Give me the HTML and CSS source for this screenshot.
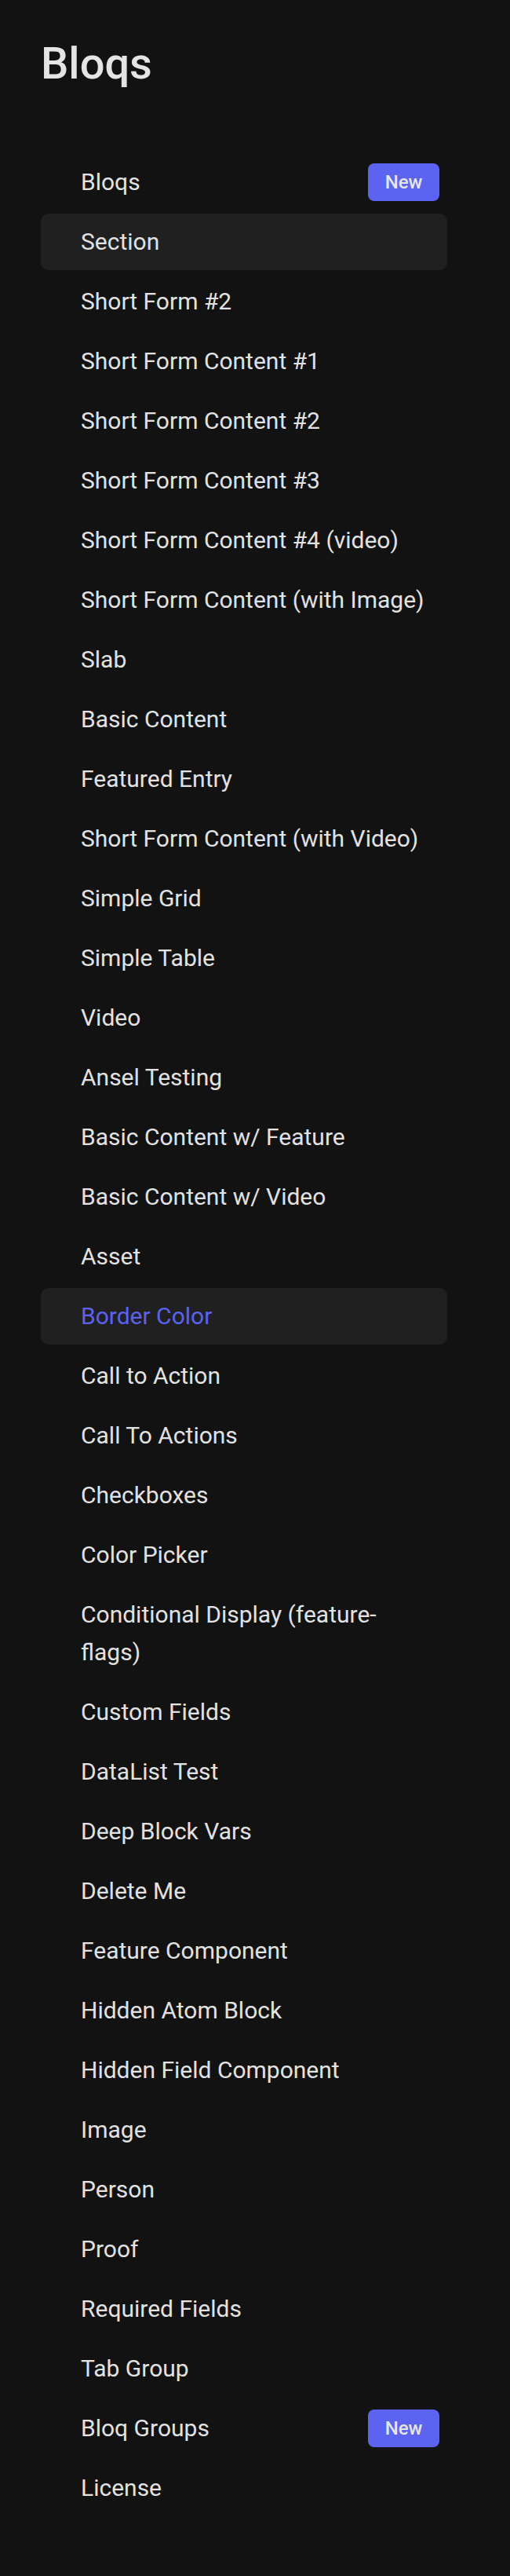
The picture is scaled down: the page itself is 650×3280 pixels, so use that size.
FILE: index.html
```html
<!DOCTYPE html>
<html lang="en">
<head>
<meta charset="utf-8">
<title>Bloqs</title>
<link rel="stylesheet" href="styles.css">
</head>
<body>
<div class="page">
  <h1 class="title">Bloqs</h1>
  <nav class="nav">
    <a class="item"><span class="label">Bloqs</span><span class="badge">New</span></a>
    <a class="item is-hover"><span class="label">Section</span></a>
    <a class="item"><span class="label">Short Form #2</span></a>
    <a class="item"><span class="label">Short Form Content #1</span></a>
    <a class="item"><span class="label">Short Form Content #2</span></a>
    <a class="item"><span class="label">Short Form Content #3</span></a>
    <a class="item"><span class="label">Short Form Content #4 (video)</span></a>
    <a class="item"><span class="label">Short Form Content (with Image)</span></a>
    <a class="item"><span class="label">Slab</span></a>
    <a class="item"><span class="label">Basic Content</span></a>
    <a class="item"><span class="label">Featured Entry</span></a>
    <a class="item"><span class="label">Short Form Content (with Video)</span></a>
    <a class="item"><span class="label">Simple Grid</span></a>
    <a class="item"><span class="label">Simple Table</span></a>
    <a class="item"><span class="label">Video</span></a>
    <a class="item"><span class="label">Ansel Testing</span></a>
    <a class="item"><span class="label">Basic Content w/ Feature</span></a>
    <a class="item"><span class="label">Basic Content w/ Video</span></a>
    <a class="item"><span class="label">Asset</span></a>
    <a class="item is-active"><span class="label">Border Color</span></a>
    <a class="item"><span class="label">Call to Action</span></a>
    <a class="item"><span class="label">Call To Actions</span></a>
    <a class="item"><span class="label">Checkboxes</span></a>
    <a class="item"><span class="label">Color Picker</span></a>
    <a class="item"><span class="label">Conditional Display (feature-flags)</span></a>
    <a class="item"><span class="label">Custom Fields</span></a>
    <a class="item"><span class="label">DataList Test</span></a>
    <a class="item"><span class="label">Deep Block Vars</span></a>
    <a class="item"><span class="label">Delete Me</span></a>
    <a class="item"><span class="label">Feature Component</span></a>
    <a class="item"><span class="label">Hidden Atom Block</span></a>
    <a class="item"><span class="label">Hidden Field Component</span></a>
    <a class="item"><span class="label">Image</span></a>
    <a class="item"><span class="label">Person</span></a>
    <a class="item"><span class="label">Proof</span></a>
    <a class="item"><span class="label">Required Fields</span></a>
    <a class="item"><span class="label">Tab Group</span></a>
    <a class="item"><span class="label">Bloq Groups</span><span class="badge">New</span></a>
    <a class="item"><span class="label">License</span></a>
  </nav>
</div>
</body>
</html>
```

FILE: styles.css
```css
html, body {
  margin: 0;
  padding: 0;
  background: #121212;
}

body {
  font-family: Roboto, "Liberation Sans", sans-serif;
  color: #e2e2e2;
  min-height: 3280px;
}

.page {
  padding: 48px 80px 80px 52px;
}

.title {
  margin: 0;
  font-size: 56px;
  font-weight: 500;
  line-height: 66px;
  color: #e4e4e4;
}

.nav {
  margin-top: 82px;
  display: flex;
  flex-direction: column;
  gap: 4px;
}

.item {
  display: flex;
  align-items: flex-start;
  justify-content: space-between;
  gap: 16px;
  padding: 12px 10px 12px 51px;
  border-radius: 10px;
  font-size: 30px;
  line-height: 48px;
  color: #e2e2e2;
  text-decoration: none;
}

.label {
  max-width: 440px;
}

.item.is-hover,
.item.is-active {
  background: #202020;
}

.item.is-active {
  color: #5b63ee;
}

.badge {
  flex: none;
  height: 48px;
  width: 91px;
  box-sizing: border-box;
  display: flex;
  align-items: center;
  justify-content: center;
  border-radius: 8px;
  background: #5d63f1;
  color: #e6e6e6;
  font-size: 24px;
  font-weight: 500;
  line-height: 1;
}
```
